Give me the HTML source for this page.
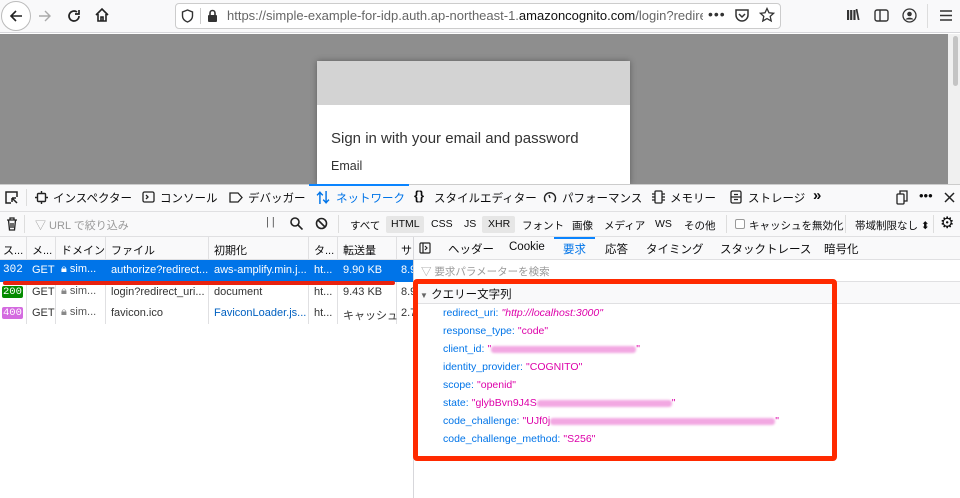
<!DOCTYPE html>
<html><head><meta charset="utf-8"><style>
*{box-sizing:border-box;margin:0;padding:0}
body{width:960px;height:498px;overflow:hidden;position:relative;background:#fff;font-family:"Liberation Sans","Noto Sans CJK JP",sans-serif;font-size:11px;color:#0c0c0d}
.a{position:absolute;white-space:nowrap}
.k{color:#0074e8;font-size:10.5px}
.v{color:#dd00a9;font-size:10.5px}
.blur{display:inline-block;height:7px;background:#f2a8e2;border-radius:3px;vertical-align:middle;filter:blur(1px)}
</style></head><body>
<div class="a" style="left:0;top:0;width:960px;height:33px;background:#f9f9fa;border-bottom:1px solid #d7d7db"></div>
<div class="a" style="left:1px;top:1px;width:30px;height:30px;border:1px solid #bbb;border-radius:50%;background:#fff"></div>
<svg class="a" style="left:8px;top:8px" width="16" height="16" viewBox="0 0 16 16" fill="none" stroke="#222" stroke-width="1.6"><path d="M14 8H3M8 3L3 8l5 5"/></svg>
<svg class="a" style="left:37px;top:8px" width="16" height="16" viewBox="0 0 16 16" fill="none" stroke="#aaa" stroke-width="1.4"><path d="M2 8h11M8 3l5 5-5 5"/></svg>
<svg class="a" style="left:66px;top:8px" width="16" height="16" viewBox="0 0 16 16" fill="none" stroke="#222" stroke-width="1.7"><path d="M13 8a5 5 0 1 1-2-4M13 2v4H9"/></svg>
<svg class="a" style="left:94px;top:7px" width="16" height="16" viewBox="0 0 16 16" fill="none" stroke="#222" stroke-width="1.6"><path d="M2 8L8 2l6 6M4 7v7h8V7M7 14v-4h2v4"/></svg>
<div class="a" style="left:175px;top:3px;width:606px;height:26px;background:#fff;border:1px solid #ccc;border-radius:4px"></div>
<svg class="a" style="left:181px;top:9px" width="13" height="14" viewBox="0 0 13 14" fill="none" stroke="#333" stroke-width="1.4"><path d="M6.5 1L1.5 3v4c0 3 2.5 5 5 6 2.5-1 5-3 5-6V3z"/></svg>
<div class="a" style="left:200px;top:8px;width:1px;height:16px;background:#ccc"></div>
<svg class="a" style="left:207px;top:9px" width="11" height="13" viewBox="0 0 11 13"><path d="M3 6V4a2.5 2.5 0 0 1 5 0v2" fill="none" stroke="#333" stroke-width="1.6"/><rect x="1" y="6" width="9" height="7" rx="1" fill="#333"/></svg>
<div class="a" style="left:227px;top:8px;width:476px;overflow:hidden;font-size:13px;color:#666">https://simple-example-for-idp.auth.ap-northeast-1.<span style="color:#111">amazoncognito.com</span>/login?redirect</div>
<div class="a" style="left:708px;top:6px;font-size:14px;color:#333;letter-spacing:1px">•••</div>
<svg class="a" style="left:734px;top:8px" width="16" height="15" viewBox="0 0 16 15" fill="none" stroke="#333" stroke-width="1.5"><path d="M2 2h12v5a6 6 0 0 1-12 0z M5 6l3 3 3-3"/></svg>
<svg class="a" style="left:759px;top:7px" width="16" height="16" viewBox="0 0 16 16" fill="none" stroke="#333" stroke-width="1.3"><path d="M8 1.5l2 4.3 4.6.5-3.4 3.1 1 4.6L8 11.6 3.8 14l1-4.6L1.4 6.3 6 5.8z"/></svg>
<div class="a" style="left:846px;top:7px;font-size:15px;color:#333;font-weight:bold;letter-spacing:-1px">III\</div>
<svg class="a" style="left:874px;top:9px" width="15" height="13" viewBox="0 0 15 13" fill="none" stroke="#333" stroke-width="1.4"><rect x="1" y="1" width="13" height="11" rx="2"/><path d="M6 1v11"/></svg>
<svg class="a" style="left:902px;top:8px" width="15" height="15" viewBox="0 0 15 15"><circle cx="7.5" cy="7.5" r="6.5" fill="none" stroke="#333" stroke-width="1.3"/><circle cx="7.5" cy="6" r="2.3" fill="#333"/><path d="M3.5 11.5c1.5-2.5 6.5-2.5 8 0" fill="#333"/></svg>
<div class="a" style="left:927px;top:4px;width:1px;height:24px;background:#ddd"></div>
<svg class="a" style="left:939px;top:9px" width="14" height="13" viewBox="0 0 14 13" stroke="#333" stroke-width="1.6"><path d="M1 2h12M1 6.5h12M1 11h12"/></svg>
<div class="a" style="left:0;top:34px;width:948px;height:150px;background:#8e8e8e"></div>
<div class="a" style="left:948px;top:34px;width:12px;height:150px;background:#f0f0f0"></div>
<div class="a" style="left:953px;top:36px;width:5px;height:50px;background:#c4c4c4;border-radius:3px"></div>
<div class="a" style="left:317px;top:61px;width:313px;height:123px;background:#fff;box-shadow:0 0 6px rgba(0,0,0,.35)"></div>
<div class="a" style="left:317px;top:61px;width:313px;height:44px;background:#d3d3d3"></div>
<div class="a" style="left:331px;top:130px;font-size:15px;color:#333">Sign in with your email and password</div>
<div class="a" style="left:331px;top:159px;font-size:12.5px;color:#333">Email</div>
<div class="a" style="left:0;top:184px;width:960px;height:28px;background:#f9f9fa;border-top:1px solid #ccc;border-bottom:1px solid #e0e0e2"></div>
<svg class="a" style="left:4px;top:190px" width="15" height="15" viewBox="0 0 15 15" fill="none" stroke="#222" stroke-width="1.5"><path d="M7 13H2V2h11v5"/><path d="M8 8l5 5M8 8v4M8 8h4" /></svg>
<div class="a" style="left:26px;top:189px;width:1px;height:17px;background:#ddd"></div>
<svg class="a" style="left:35px;top:191px" width="13" height="13" viewBox="0 0 13 13" fill="none" stroke="#222" stroke-width="1.4"><rect x="2.5" y="2.5" width="8" height="8" rx="1"/><path d="M6.5 0v2.5M6.5 10.5V13M0 6.5h2.5M10.5 6.5H13"/></svg>
<div class="a" style="left:53px;top:190px;font-size:11.5px">インスペクター</div>
<svg class="a" style="left:142px;top:191px" width="13" height="12" viewBox="0 0 13 12" fill="none" stroke="#222" stroke-width="1.3"><rect x="1" y="1" width="11" height="10" rx="1.5"/><path d="M4 4l2 2-2 2"/></svg>
<div class="a" style="left:160px;top:190px;font-size:11.5px">コンソール</div>
<svg class="a" style="left:229px;top:192px" width="14" height="11" viewBox="0 0 14 11" fill="none" stroke="#222" stroke-width="1.3"><path d="M1 1h8l4 4.5-4 4.5H1z"/></svg>
<div class="a" style="left:248px;top:190px;font-size:11.5px">デバッガー</div>
<div class="a" style="left:309px;top:184px;width:100px;height:2px;background:#0a84ff"></div>
<div class="a" style="left:316px;top:188px;font-size:14px;color:#0074e8;font-weight:bold">⇅</div>
<div class="a" style="left:336px;top:190px;font-size:11.5px;color:#0074e8">ネットワーク</div>
<div class="a" style="left:414px;top:188px;font-size:13px;font-weight:bold">{}</div>
<div class="a" style="left:434px;top:190px;font-size:11.5px">スタイルエディター</div>
<svg class="a" style="left:543px;top:190px" width="14" height="14" viewBox="0 0 14 14" fill="none" stroke="#222" stroke-width="1.4"><path d="M3 12A5.5 5.5 0 1 1 11 12M7 8l-1-3"/></svg>
<div class="a" style="left:562px;top:190px;font-size:11.5px">パフォーマンス</div>
<svg class="a" style="left:652px;top:190px" width="13" height="14" viewBox="0 0 13 14" fill="none" stroke="#222" stroke-width="1.3"><rect x="3" y="1" width="7" height="12" rx="1"/><path d="M0 4h3M0 7h3M0 10h3M10 4h3M10 7h3M10 10h3"/></svg>
<div class="a" style="left:670px;top:190px;font-size:11.5px">メモリー</div>
<svg class="a" style="left:730px;top:190px" width="12" height="14" viewBox="0 0 12 14" fill="none" stroke="#222" stroke-width="1.3"><rect x="1" y="1" width="10" height="12" rx="1.5"/><path d="M1 7h10M4 4.5h4M4 9.5h4"/></svg>
<div class="a" style="left:748px;top:190px;font-size:11.5px">ストレージ</div>
<div class="a" style="left:813px;top:187px;font-size:15px;font-weight:bold">»</div>
<svg class="a" style="left:896px;top:190px" width="12" height="15" viewBox="0 0 12 15" fill="none" stroke="#222" stroke-width="1.3"><rect x="1" y="4" width="7" height="10" rx="1"/><path d="M4 4V1h7v10H8"/></svg>
<div class="a" style="left:919px;top:188px;font-size:13px">•••</div>
<svg class="a" style="left:944px;top:192px" width="11" height="11" viewBox="0 0 11 11" stroke="#222" stroke-width="1.5"><path d="M1 1l9 9M10 1l-9 9"/></svg>
<div class="a" style="left:0;top:212px;width:960px;height:25px;background:#f9f9fa;border-bottom:1px solid #e0e0e2"></div>
<svg class="a" style="left:6px;top:217px" width="12" height="14" viewBox="0 0 12 14" fill="none" stroke="#222" stroke-width="1.3"><path d="M1 3h10M4 3V1h4v2M2.5 3l1 10h5l1-10M5 6v5M7 6v5"/></svg>
<div class="a" style="left:24px;top:215px;width:1px;height:18px;background:#ddd"></div>
<div class="a" style="left:35px;top:217px;font-size:11px;color:#999">▽ URL で絞り込み</div>
<div class="a" style="left:266px;top:216px;font-size:11px;color:#555">| |</div>
<svg class="a" style="left:290px;top:217px" width="13" height="13" viewBox="0 0 13 13" fill="none" stroke="#222" stroke-width="1.6"><circle cx="5" cy="5" r="4"/><path d="M8 8l4.5 4.5"/></svg>
<svg class="a" style="left:315px;top:217px" width="13" height="13" viewBox="0 0 13 13" fill="none" stroke="#222" stroke-width="1.6"><circle cx="6.5" cy="6.5" r="5"/><path d="M3 3l7 7"/></svg>
<div class="a" style="left:338px;top:215px;width:1px;height:18px;background:#ddd"></div>
<div class="a" style="left:350px;top:218px;font-size:10.5px">すべて</div>
<div class="a" style="left:386px;top:216px;width:38px;height:17px;background:#e6e6e6;border-radius:2px"></div>
<div class="a" style="left:391px;top:218px;font-size:10.5px">HTML</div>
<div class="a" style="left:431px;top:218px;font-size:10.5px">CSS</div>
<div class="a" style="left:464px;top:218px;font-size:10.5px">JS</div>
<div class="a" style="left:482px;top:216px;width:33px;height:17px;background:#e6e6e6;border-radius:2px"></div>
<div class="a" style="left:488px;top:218px;font-size:10.5px">XHR</div>
<div class="a" style="left:522px;top:218px;font-size:10.5px">フォント</div>
<div class="a" style="left:572px;top:218px;font-size:10.5px">画像</div>
<div class="a" style="left:604px;top:218px;font-size:10.5px">メディア</div>
<div class="a" style="left:655px;top:218px;font-size:10.5px">WS</div>
<div class="a" style="left:684px;top:218px;font-size:10.5px">その他</div>
<div class="a" style="left:726px;top:215px;width:1px;height:18px;background:#ddd"></div>
<div class="a" style="left:735px;top:219px;width:10px;height:10px;border:1px solid #999;border-radius:2px;background:#fff"></div>
<div class="a" style="left:749px;top:218px;font-size:10.5px">キャッシュを無効化</div>
<div class="a" style="left:845px;top:215px;width:1px;height:18px;background:#ddd"></div>
<div class="a" style="left:855px;top:218px;font-size:10.5px">帯域制限なし ⬍</div>
<div class="a" style="left:933px;top:215px;width:1px;height:18px;background:#ddd"></div>
<div class="a" style="left:940px;top:213px;font-size:16px">⚙</div>
<div class="a" style="left:0;top:237px;width:413px;height:23px;background:#f9f9fa;border-bottom:1px solid #e0e0e2"></div>
<div class="a" style="left:3px;top:242px">ス...</div>
<div class="a" style="left:32px;top:242px">メ...</div>
<div class="a" style="left:61px;top:242px">ドメイン</div>
<div class="a" style="left:111px;top:242px">ファイル</div>
<div class="a" style="left:214px;top:242px">初期化</div>
<div class="a" style="left:314px;top:242px">タ...</div>
<div class="a" style="left:343px;top:242px">転送量</div>
<div class="a" style="left:401px;top:242px">サ</div>
<div class="a" style="left:26px;top:237px;width:1px;height:87px;background:#e0e0e2"></div>
<div class="a" style="left:55px;top:237px;width:1px;height:87px;background:#e0e0e2"></div>
<div class="a" style="left:105px;top:237px;width:1px;height:87px;background:#e0e0e2"></div>
<div class="a" style="left:208px;top:237px;width:1px;height:87px;background:#e0e0e2"></div>
<div class="a" style="left:308px;top:237px;width:1px;height:87px;background:#e0e0e2"></div>
<div class="a" style="left:337px;top:237px;width:1px;height:87px;background:#e0e0e2"></div>
<div class="a" style="left:396px;top:237px;width:1px;height:87px;background:#e0e0e2"></div>
<div class="a" style="left:0;top:260px;width:413px;height:22px;background:#0074e8"></div>
<div class="a" style="left:3px;top:264px;color:#fff;font-family:'Liberation Mono',monospace">302</div>
<div class="a" style="left:32px;top:264px;color:#fff">GET</div>
<div class="a" style="left:61px;top:263px;color:#fff">🔒︎ sim...</div>
<div class="a" style="left:111px;top:264px;color:#fff">authorize?redirect...</div>
<div class="a" style="left:214px;top:264px;color:#fff">aws-amplify.min.j...</div>
<div class="a" style="left:314px;top:264px;color:#fff">ht...</div>
<div class="a" style="left:343px;top:264px;color:#fff">9.90 KB</div>
<div class="a" style="left:401px;top:264px;color:#fff">8.9</div>
<div class="a" style="left:3px;top:281px;width:392px;height:4px;background:#e8220f;border-radius:2px"></div>
<div class="a" style="left:2px;top:286px;font-size:10.5px;color:#fff;background:#058b00;padding:0 1px;font-family:'Liberation Mono',monospace;border-radius:2px">200</div>
<div class="a" style="left:32px;top:286px;color:#333">GET</div>
<div class="a" style="left:61px;top:285px;color:#555"><span style="color:#888">🔒︎</span> sim...</div>
<div class="a" style="left:111px;top:286px;color:#333">login?redirect_uri...</div>
<div class="a" style="left:214px;top:286px;color:#333">document</div>
<div class="a" style="left:314px;top:286px;color:#333">ht...</div>
<div class="a" style="left:343px;top:286px;color:#333">9.43 KB</div>
<div class="a" style="left:401px;top:286px;color:#333">8.9</div>
<div class="a" style="left:2px;top:307px;font-size:10.5px;color:#fff;background:#d46be0;padding:0 1px;font-family:'Liberation Mono',monospace;border-radius:2px">400</div>
<div class="a" style="left:32px;top:307px;color:#333">GET</div>
<div class="a" style="left:61px;top:306px;color:#555"><span style="color:#888">🔒︎</span> sim...</div>
<div class="a" style="left:111px;top:307px;color:#333">favicon.ico</div>
<div class="a" style="left:214px;top:307px;color:#0060c0">FaviconLoader.js...</div>
<div class="a" style="left:314px;top:307px;color:#333">ht...</div>
<div class="a" style="left:343px;top:307px;color:#333">キャッシュ</div>
<div class="a" style="left:401px;top:307px;color:#333">2.7</div>
<div class="a" style="left:413px;top:237px;width:1px;height:261px;background:#d7d7db"></div>
<div class="a" style="left:414px;top:237px;width:546px;height:23px;background:#f9f9fa;border-bottom:1px solid #e0e0e2"></div>
<svg class="a" style="left:419px;top:242px" width="12" height="12" viewBox="0 0 12 12" fill="none" stroke="#222" stroke-width="1.2"><rect x="1" y="1" width="10" height="10" rx="1"/><path d="M4 1v10M6 4l2 2-2 2"/></svg>
<div class="a" style="left:448px;top:241px;font-size:11.5px">ヘッダー</div>
<div class="a" style="left:509px;top:241px;font-size:11.5px">Cookie</div>
<div class="a" style="left:554px;top:237px;width:41px;height:2px;background:#0a84ff"></div>
<div class="a" style="left:563px;top:241px;font-size:11.5px;color:#0074e8">要求</div>
<div class="a" style="left:605px;top:241px;font-size:11.5px">応答</div>
<div class="a" style="left:646px;top:241px;font-size:11.5px">タイミング</div>
<div class="a" style="left:720px;top:241px;font-size:11.5px">スタックトレース</div>
<div class="a" style="left:824px;top:241px;font-size:11.5px">暗号化</div>
<div class="a" style="left:414px;top:260px;width:546px;height:22px;border-bottom:1px solid #e0e0e2"></div>
<div class="a" style="left:421px;top:264px;font-size:10.5px;color:#999">▽ 要求パラメーターを検索</div>
<div class="a" style="left:414px;top:282px;width:546px;height:22px;background:#f9f9fa;border-bottom:1px solid #e0e0e2"></div>
<div class="a" style="left:420px;top:286px;font-size:11.5px"><span style="font-size:8px;color:#666">▼</span> クエリー文字列</div>
<div class="a" style="left:443px;top:307px"><span class="k">redirect_uri:</span> <span class="v" style="font-style:italic">"http://localhost:3000"</span></div>
<div class="a" style="left:443px;top:325px"><span class="k">response_type:</span> <span class="v">"code"</span></div>
<div class="a" style="left:443px;top:343px"><span class="k">client_id:</span> <span class="v">"<span class="blur" style="width:145px"></span>"</span></div>
<div class="a" style="left:443px;top:361px"><span class="k">identity_provider:</span> <span class="v">"COGNITO"</span></div>
<div class="a" style="left:443px;top:379px"><span class="k">scope:</span> <span class="v">"openid"</span></div>
<div class="a" style="left:443px;top:397px"><span class="k">state:</span> <span class="v">"glybBvn9J4S<span class="blur" style="width:135px"></span>"</span></div>
<div class="a" style="left:443px;top:415px"><span class="k">code_challenge:</span> <span class="v">"UJf0j<span class="blur" style="width:225px"></span>"</span></div>
<div class="a" style="left:443px;top:433px"><span class="k">code_challenge_method:</span> <span class="v">"S256"</span></div>
<div class="a" style="left:413px;top:279px;width:424px;height:182px;border:5px solid #ff2a00;border-radius:4px"></div>
</body></html>
